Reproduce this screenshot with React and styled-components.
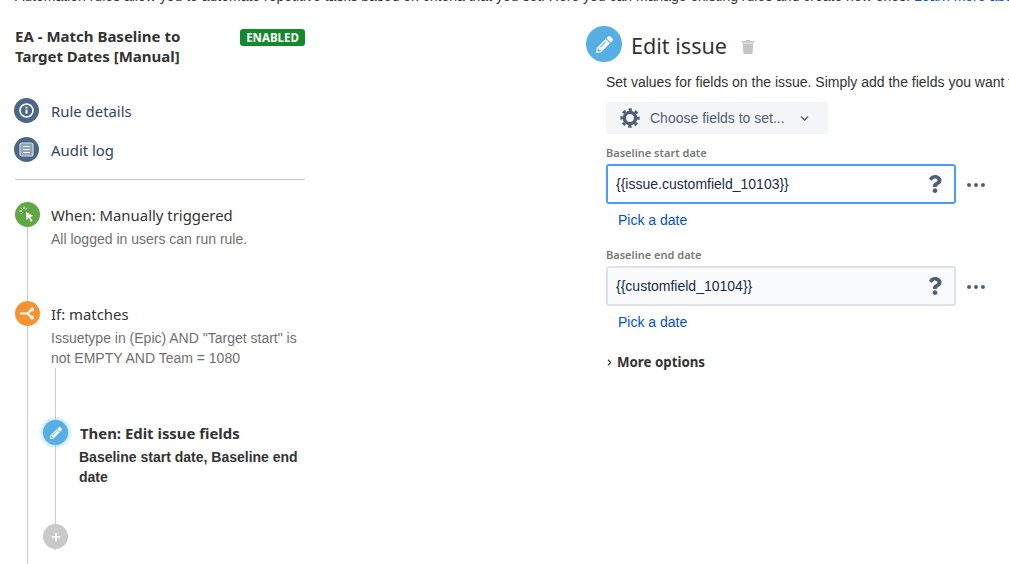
import React from "react";
import styled, { createGlobalStyle } from "styled-components";
import { FaPencilAlt, FaTrash, FaQuestion, FaPlus, FaChevronDown, FaChevronRight } from "react-icons/fa";

const GlobalStyle = createGlobalStyle`
    html, body {
        margin: 0;
        padding: 0;
        background: #fff;
        overflow: hidden;
    }
`;

const Page = styled.div`
    width: 1009px;
    height: 564px;
    overflow: hidden;
    font-family: "Liberation Sans", Arial, sans-serif;
    color: #333;
`;

const Intro = styled.div`
    height: 4px;
    line-height: 16px;
    font-size: 14px;
    white-space: nowrap;
    overflow: hidden;
    display: flex;
    align-items: flex-end;
    padding-left: 15px;

    a {
        color: #0052cc;
        margin-left: 4px;
    }
`;

const Columns = styled.div`
    display: grid;
    grid-template-columns: 290px 1fr;
    column-gap: 281px;
    padding: 0 0 0 15px;
`;

const Sidebar = styled.div`
    display: flex;
    flex-direction: column;
`;

const TitleRow = styled.div`
    display: flex;
    justify-content: space-between;
    align-items: flex-start;
    padding-top: 22px;
`;

const RuleName = styled.h2`
    margin: 0;
    width: 200px;
    font-family: "Noto Sans", sans-serif;
    font-size: 15px;
    font-weight: 700;
    line-height: 20px;
    color: #333;
`;

const Badge = styled.span`
    margin-top: 3px;
    background: #14892c;
    color: #fff;
    border-radius: 3px;
    width: 65px;
    height: 17px;
    font-family: "Noto Sans", sans-serif;
    font-size: 11.5px;
    font-weight: 700;
    line-height: 17px;
    text-align: center;
`;

const Nav = styled.div`
    display: flex;
    flex-direction: column;
    gap: 14px;
    margin-top: 32px;
    padding-bottom: 17px;
    border-bottom: 1px solid #ccc;
`;

const NavItem = styled.div`
    display: flex;
    align-items: center;
    gap: 12px;
    margin-left: -1px;
    font-family: "Noto Sans", sans-serif;
    font-size: 14.9px;
    color: #344563;
`;

const Round = styled.span`
    flex: none;
    width: 25px;
    height: 25px;
    border-radius: 50%;
    background: ${(p) => p.$bg};
    color: #fff;
    display: flex;
    align-items: center;
    justify-content: center;
    position: relative;
    z-index: 1;
    box-shadow: ${(p) => (p.$glow ? "0 0 4px 1px #9ed2f2" : "none")};
`;

const Timeline = styled.div`
    position: relative;
    margin-top: 22px;
    height: 384px;

    &::before {
        content: "";
        position: absolute;
        left: 12px;
        top: 20px;
        bottom: 0;
        width: 1px;
        background: #ccc;
    }
`;

const Step = styled.div`
    display: flex;
    gap: ${(p) => p.$gap || 11}px;
    height: ${(p) => p.$height}px;
`;

const StepText = styled.div`
    padding-top: 3px;
`;

const StepTitle = styled.div`
    font-family: "Noto Sans", sans-serif;
    font-size: 14.9px;
    line-height: 20px;
    color: #333;
    font-weight: ${(p) => (p.$active ? 700 : 400)};
`;

const StepDesc = styled.div`
    margin-top: 4px;
    font-size: 14px;
    line-height: 20px;
    color: ${(p) => (p.$active ? "#333" : "#707070")};
    font-weight: ${(p) => (p.$active ? 700 : 400)};
    margin-left: ${(p) => (p.$active ? "-1px" : "0")};
`;

const Nested = styled.div`
    position: relative;
    margin-left: 28px;
    padding-top: 52px;
    height: 196px;

    &::before {
        content: "";
        position: absolute;
        left: 12px;
        top: 0;
        height: 182px;
        width: 1px;
        background: #ccc;
    }
`;

const Panel = styled.div`
    display: flex;
    flex-direction: column;
`;

const PanelHead = styled.div`
    display: flex;
    align-items: center;
    gap: 9px;
    height: 36px;
    padding-top: 22px;
`;

const BigIcon = styled.span`
    width: 36px;
    height: 36px;
    border-radius: 50%;
    background: #57aee3;
    color: #fff;
    display: flex;
    align-items: center;
    justify-content: center;
`;

const PanelTitle = styled.h1`
    margin: 4px 0 0;
    font-family: "Noto Sans", sans-serif;
    font-size: 21.6px;
    font-weight: 400;
    line-height: 36px;
    color: #333;
`;

const Trash = styled.span`
    margin-left: 5px;
    margin-top: 6px;
    color: #c4c4c4;
    display: flex;
`;

const Form = styled.div`
    padding-left: 20px;
    display: flex;
    flex-direction: column;
    align-items: flex-start;
`;

const Help = styled.div`
    margin-top: 10px;
    font-size: 14px;
    line-height: 20px;
    white-space: nowrap;
`;

const Chooser = styled.div`
    margin-top: 10px;
    width: 222px;
    height: 32px;
    box-sizing: border-box;
    padding-left: 14px;
    background: #f4f5f7;
    border-radius: 3px;
    display: flex;
    align-items: center;
    color: #505f79;
    font-size: 14px;

    span {
        margin: 0 15px 0 10px;
    }
`;

const FieldLabel = styled.label`
    display: block;
    margin-top: ${(p) => p.$top}px;
    font-family: "Noto Sans", sans-serif;
    font-size: 11px;
    font-weight: 600;
    line-height: 16px;
    color: #777;
`;

const FieldRow = styled.div`
    display: flex;
    align-items: center;
    margin-top: 3px;
`;

const Input = styled.div`
    width: 350px;
    height: 40px;
    box-sizing: border-box;
    border: 2px solid ${(p) => (p.$focused ? "#4c9aff" : "#dfe1e6")};
    background: ${(p) => (p.$focused ? "#fff" : "#fafbfc")};
    border-radius: 3px;
    padding: 0 10px 0 8px;
    display: flex;
    align-items: center;
    justify-content: space-between;
    font-size: 14px;
    color: #172b4d;
`;

const More = styled.span`
    display: flex;
    gap: 3px;
    margin: 2px 0 0 11px;

    i {
        width: 4px;
        height: 4px;
        border-radius: 50%;
        background: #505f79;
    }
`;

const DateLink = styled.a`
    margin: 6px 0 0 12px;
    font-size: 14px;
    line-height: 20px;
    color: #0052cc;
`;

const Options = styled.div`
    display: flex;
    align-items: center;
    gap: 4px;
    margin-top: 21px;
    font-family: "Noto Sans", sans-serif;
    font-size: 13.3px;
    font-weight: 700;
    color: #333;
`;

function DateField({ label, value, focused, top }) {
    return (
        <>
            <FieldLabel $top={top}>{label}</FieldLabel>
            <FieldRow>
                <Input $focused={focused}>
                    {value}
                    <FaQuestion size={18} color="#505f79" />
                </Input>
                <More>
                    <i />
                    <i />
                    <i />
                </More>
            </FieldRow>
            <DateLink>Pick a date</DateLink>
        </>
    );
}

export default function App() {
    return (
        <Page>
            <GlobalStyle />
            <Intro>
                Automation rules allow you to automate repetitive tasks based on criteria that you set. Here you can manage existing rules and create new ones.
                <a>Learn more about automation rules</a>
            </Intro>
            <Columns>
                <Sidebar>
                    <TitleRow>
                        <RuleName>EA - Match Baseline to Target Dates [Manual]</RuleName>
                        <Badge>ENABLED</Badge>
                    </TitleRow>
                    <Nav>
                        <NavItem>
                            <Round $bg="#4a6785">
                                <svg width="17" height="17" viewBox="0 0 17 17" fill="none" stroke="#fff">
                                    <circle cx="8.5" cy="8.5" r="6.5" strokeWidth="1.6" />
                                    <path d="M8.5 7.5v4.2" strokeWidth="2" />
                                    <path d="M8.5 4.6v1.8" strokeWidth="2" />
                                </svg>
                            </Round>
                            Rule details
                        </NavItem>
                        <NavItem>
                            <Round $bg="#4a6785">
                                <svg width="17" height="17" viewBox="0 0 17 17" fill="none" stroke="#fff">
                                    <rect x="2" y="2" width="13" height="13" rx="2" fill="#8da3b9" strokeWidth="1.2" stroke="#d5dde5" />
                                    <path d="M5 5.5h7M5 8.5h7M5 11.5h7" strokeWidth="1.2" />
                                </svg>
                            </Round>
                            Audit log
                        </NavItem>
                    </Nav>
                    <Timeline>
                        <Step $height={99}>
                            <Round $bg="#5fa744">
                                <svg width="19" height="19" viewBox="0 0 19 19" fill="none" stroke="#fff">
                                    <path d="M8 7l7.5 4-3.2 1 2.2 4-1.6.8-2-4L8.5 15z" fill="#fff" stroke="none" />
                                    <path d="M6 1.5V4M1.5 6H4M2.8 2.8l1.6 1.6M9.2 2.8L7.6 4.4M2.8 9.2l1.6-1.6" strokeWidth="1" />
                                </svg>
                            </Round>
                            <StepText>
                                <StepTitle>When: Manually triggered</StepTitle>
                                <StepDesc>All logged in users can run rule.</StepDesc>
                            </StepText>
                        </Step>
                        <Step $height={67}>
                            <Round $bg="#f79232">
                                <svg width="17" height="17" viewBox="0 0 17 17" fill="none" stroke="#fff" strokeWidth="2">
                                    <path d="M1 8.5h7.5l3.5-3.5M8.5 8.5l3.5 3.5" strokeWidth="2.2" />
                                    <circle cx="13" cy="4.5" r="2" fill="#fff" stroke="none" />
                                    <circle cx="13" cy="12.5" r="2" fill="#fff" stroke="none" />
                                </svg>
                            </Round>
                            <StepText>
                                <StepTitle>If: matches</StepTitle>
                                <StepDesc>
                                    Issuetype in (Epic) AND "Target start" is
                                    <br />
                                    not EMPTY AND Team = 1080
                                </StepDesc>
                            </StepText>
                        </Step>
                        <Nested>
                            <Step $height={104} $gap={12}>
                                <Round $bg="#57aee3" $glow>
                                    <FaPencilAlt size={12} />
                                </Round>
                                <StepText>
                                    <StepTitle $active>Then: Edit issue fields</StepTitle>
                                    <StepDesc $active>
                                        Baseline start date, Baseline end
                                        <br />
                                        date
                                    </StepDesc>
                                </StepText>
                            </Step>
                            <Round $bg="#c9c9c9">
                                <FaPlus size={10} />
                            </Round>
                        </Nested>
                    </Timeline>
                </Sidebar>
                <Panel>
                    <PanelHead>
                        <BigIcon>
                            <FaPencilAlt size={17} />
                        </BigIcon>
                        <PanelTitle>Edit issue</PanelTitle>
                        <Trash>
                            <FaTrash size={14} />
                        </Trash>
                    </PanelHead>
                    <Form>
                        <Help>Set values for fields on the issue. Simply add the fields you want to edit and set their values.</Help>
                        <Chooser>
                            <svg width="20" height="20" viewBox="0 0 20 20" fill="none" stroke="#505f79">
                                <circle cx="10" cy="10" r="5.6" strokeWidth="3.4" />
                                <circle cx="10" cy="10" r="8.4" strokeWidth="2.6" strokeDasharray="3.4 3.2" strokeDashoffset="1.7" />
                            </svg>
                            <span>Choose fields to set...</span>
                            <FaChevronDown size={9} />
                        </Chooser>
                        <DateField label="Baseline start date" value="{{issue.customfield_10103}}" focused top={11} />
                        <DateField label="Baseline end date" value="{{customfield_10104}}" top={17} />
                        <Options>
                            <FaChevronRight size={7} />
                            More options
                        </Options>
                    </Form>
                </Panel>
            </Columns>
        </Page>
    );
}
